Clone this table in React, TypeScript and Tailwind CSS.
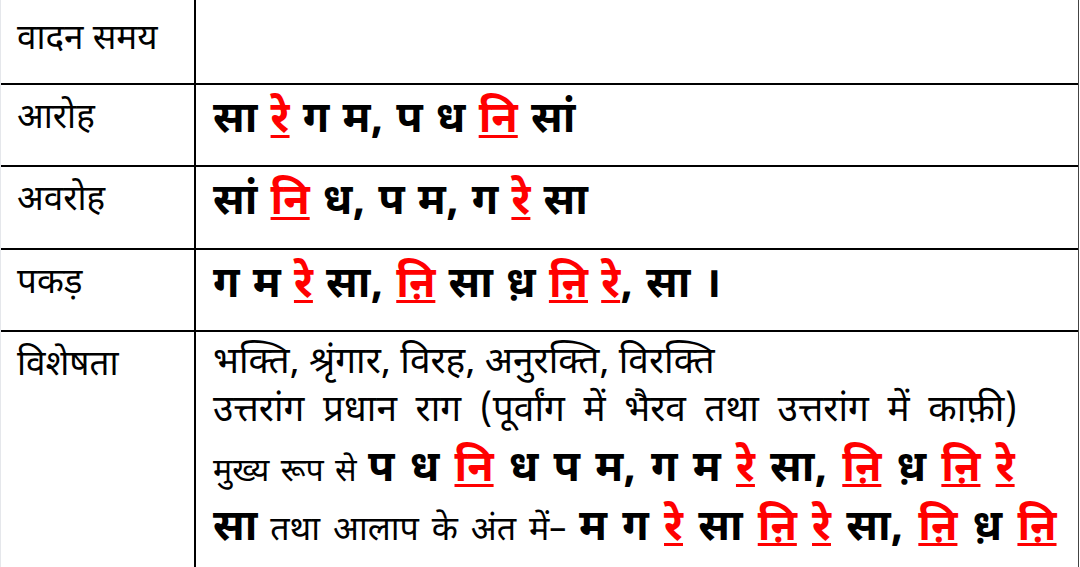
import React from "react";

const deva = "font-['Noto_Sans_Devanagari','Lohit_Devanagari','Noto_Serif_Devanagari','Mangal','Noto_Sans',sans-serif]";

// komal / mandra swar, red with underline
function K({ children }: { children: React.ReactNode }) {
  return (
    <span className="text-[#ff0000] underline decoration-[3px] underline-offset-[3px]">
      {children}
    </span>
  );
}

function Row({
  label,
  children,
  h,
  top = "pt-[11px]",
}: {
  label: string;
  children?: React.ReactNode;
  h: string;
  top?: string;
}) {
  return (
    <div className={`grid grid-cols-[195px_1fr] border-b-2 border-black ${h}`}>
      <div className={`border-r-2 border-black pl-[16px] text-[35px] leading-[48px] ${top}`}>
        {label}
      </div>
      <div className="pl-[17px] pt-[9px]">{children}</div>
    </div>
  );
}

export default function App() {
  return (
    <div className={`h-[567px] w-[1080px] overflow-hidden bg-white text-black ${deva}`}>
      <div className="w-[1079px] border-r border-l border-l-gray-200 border-r-[#444]">
        <Row label="वादन समय" h="h-[85px]" top="pt-[17px]" />
        <Row label="आरोह" h="h-[82px]">
          <p className="text-[43px] font-bold leading-[56px] [word-spacing:2px]">
            सा <K>रे</K> ग म, प ध <K>नि</K> सां
          </p>
        </Row>
        <Row label="अवरोह" h="h-[83px]">
          <p className="text-[43px] font-bold leading-[56px] [word-spacing:2px]">
            सां <K>नि</K> ध, प म, ग <K>रे</K> सा
          </p>
        </Row>
        <Row label="पकड़" h="h-[82px]">
          <p className="text-[43px] font-bold leading-[56px] [word-spacing:2px]">
            ग म <K>रे</K> सा, <K>ऩि</K> सा ध़ <K>ऩि</K> <K>रे</K>, सा ।
          </p>
        </Row>
        <div className="grid h-[240px] grid-cols-[195px_1fr]">
          <div className="border-r-2 border-black pl-[16px] pt-[11px] text-[35px] leading-[48px]">
            विशेषता
          </div>
          <div className="pl-[17px] pt-[8px]">
            <p className="text-[37px] leading-[48px]">भक्ति, श्रृंगार, विरह, अनुरक्ति, विरक्ति</p>
            <p className="text-[37px] leading-[48px] [word-spacing:9px]">
              उत्तरांग प्रधान राग (पूर्वांग में भैरव तथा उत्तरांग में काफ़ी)
            </p>
            <p className="mt-[6px] text-[32px] leading-[57px] [word-spacing:3px]">
              मुख्य रूप से{" "}
              <span className="text-[43px] font-bold [word-spacing:4px]">
                प ध <K>नि</K> ध प म, ग म <K>रे</K> सा, <K>ऩि</K> ध़ <K>ऩि</K> <K>रे</K>
              </span>
            </p>
            <p className="text-[34px] leading-[56px] [word-spacing:4px]">
              <span className="text-[43px] font-bold">सा</span> तथा आलाप के अंत में–{" "}
              <span className="text-[43px] font-bold">
                म ग <K>रे</K> सा <K>ऩि</K> <K>रे</K> सा, <K>ऩि</K> ध़ <K>ऩि</K>
              </span>
            </p>
          </div>
        </div>
      </div>
    </div>
  );
}
